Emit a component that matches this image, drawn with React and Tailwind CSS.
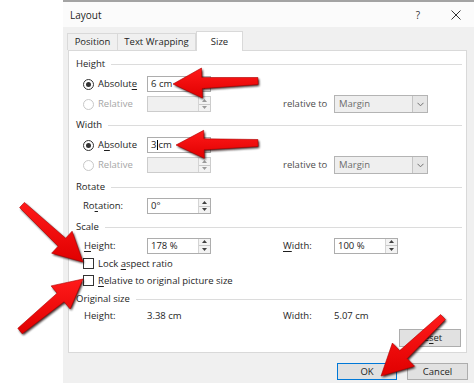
import React from "react";

function U({ children }) {
  return <span className="underline decoration-1 underline-offset-[2px]">{children}</span>;
}

function Tri({ up, color = "#404040" }) {
  return (
    <svg width="5" height="3" viewBox="0 0 5 3">
      {up ? <polygon points="0,3 5,3 2.5,0" fill={color} /> : <polygon points="0,0 5,0 2.5,3" fill={color} />}
    </svg>
  );
}

function SpinBox({ value, disabled }) {
  return (
    <div
      className={
        disabled
          ? "flex h-[16px] w-[64px] border border-[#cccccc] bg-[#f0f0f0]"
          : "flex h-[16px] w-[64px] border border-[#adadad] bg-white"
      }
    >
      <div className="flex-1 pl-[3px] leading-[14px] text-[#1e1e1e]">{value}</div>
      <div className="flex w-[12px] flex-col border-l border-[#d4d4d4] bg-[#f3f3f3]">
        <div className="flex flex-1 items-center justify-center">
          <Tri up color={disabled ? "#9a9a9a" : "#404040"} />
        </div>
        <div className="h-px bg-[#c8c8c8]" />
        <div className="flex flex-1 items-center justify-center">
          <Tri color={disabled ? "#9a9a9a" : "#404040"} />
        </div>
      </div>
    </div>
  );
}

function Select() {
  return (
    <div className="flex h-[18px] w-[94px] border border-[#b4b4b4] bg-[#efefef]">
      <div className="flex-1 pl-[4px] leading-[16px] text-[#6d6d6d]">Margin</div>
      <div className="flex w-[15px] items-center justify-center border-l border-[#c4c4c4] bg-[#e6e6e6]">
        <svg width="7" height="5" viewBox="0 0 7 5">
          <polyline points="0.5,0.8 3.5,3.8 6.5,0.8" fill="none" stroke="#707070" strokeWidth="1" />
        </svg>
      </div>
    </div>
  );
}

function Radio({ checked, disabled }) {
  return (
    <div
      className={
        disabled
          ? "flex h-[11px] w-[11px] items-center justify-center rounded-full border border-[#c8c8c8] bg-white"
          : "flex h-[11px] w-[11px] items-center justify-center rounded-full border border-[#333333] bg-white"
      }
    >
      {checked ? <div className="h-[5px] w-[5px] rounded-full bg-[#333333]" /> : null}
    </div>
  );
}

function Header({ children, mt }) {
  return (
    <div className={`flex h-[14px] items-center ${mt}`}>
      <span className="text-[#1e1e1e]">{children}</span>
      <div className="ml-[6px] h-px flex-1 bg-[#dcdcdc]" />
    </div>
  );
}

function RadioLabel({ checked, disabled, children }) {
  return (
    <div className="flex w-[71px] items-center pl-[7px]">
      <Radio checked={checked} disabled={disabled} />
      <span className={disabled ? "ml-[4px] text-[#a6a6a6]" : "ml-[4px] text-[#1e1e1e]"}>{children}</span>
    </div>
  );
}

function Checkbox({ children }) {
  return (
    <div className="flex h-[17px] items-center pl-[7px]">
      <div className="h-[11px] w-[11px] border border-[#333333] bg-white" />
      <span className="ml-[4px] text-[#1e1e1e]">{children}</span>
    </div>
  );
}

function arrowPoints(x1, y1, x2, y2, wTail, wBase, headLen, headHalf) {
  const dx = x2 - x1;
  const dy = y2 - y1;
  const len = Math.hypot(dx, dy);
  const ux = dx / len;
  const uy = dy / len;
  const px = -uy;
  const py = ux;
  const bx = x2 - ux * headLen;
  const by = y2 - uy * headLen;
  const pts = [
    [x1 + px * wTail, y1 + py * wTail],
    [bx + px * wBase, by + py * wBase],
    [bx + px * headHalf, by + py * headHalf],
    [x2, y2],
    [bx - px * headHalf, by - py * headHalf],
    [bx - px * wBase, by - py * wBase],
    [x1 - px * wTail, y1 - py * wTail],
  ];
  return pts.map((p) => `${p[0].toFixed(1)},${p[1].toFixed(1)}`).join(" ");
}

const ARROWS = [
  [258, 81, 173, 84, 3.5, 5.5, 29, 15],
  [258, 143, 176, 145, 3.5, 5.5, 28, 14],
  [22, 205, 83, 262, 3.5, 5.5, 29, 15],
  [20, 331, 83, 279, 3.5, 5.5, 29, 15],
  [443, 317, 381, 376, 3.5, 5.5, 31, 16],
];

function Arrows() {
  return (
    <svg className="pointer-events-none absolute left-0 top-0" width="474" height="387" viewBox="0 0 474 387">
      <defs>
        <filter id="sh" x="-20%" y="-20%" width="140%" height="140%">
          <feGaussianBlur stdDeviation="0.9" />
        </filter>
        <linearGradient id="rg" x1="0" y1="0" x2="0" y2="1">
          <stop offset="0" stopColor="#ff1a1a" />
          <stop offset="1" stopColor="#e00000" />
        </linearGradient>
      </defs>
      {ARROWS.map((a, i) => {
        const pts = arrowPoints(...a);
        return (
          <g key={i}>
            <polygon points={pts} fill="#1a0000" opacity="0.85" transform="translate(1.2,1.6)" filter="url(#sh)" />
            <polygon points={pts} fill="url(#rg)" stroke="#b00000" strokeWidth="0.6" strokeLinejoin="round" />
          </g>
        );
      })}
    </svg>
  );
}

export default function App() {
  return (
    <div className="relative h-[387px] w-[474px] overflow-hidden bg-white font-['Open_Sans','Noto_Sans',sans-serif] text-[9.5px] leading-none">
      <div className="ml-[63px] flex h-[383px] w-[411px] flex-col border-t-2 border-[#a3a3a3] bg-[#f0f0f0]">
        {/* title bar */}
        <div className="flex h-[25px] items-center bg-[#fbfbfb] pl-[7px] pr-[13px]">
          <span className="text-[10px] text-[#1e1e1e]">Layout</span>
          <span className="ml-auto text-[10px] text-[#333333]">?</span>
          <svg className="ml-[31px]" width="10" height="10" viewBox="0 0 10 10">
            <line x1="0.5" y1="0.5" x2="9.5" y2="9.5" stroke="#333333" strokeWidth="1" />
            <line x1="9.5" y1="0.5" x2="0.5" y2="9.5" stroke="#333333" strokeWidth="1" />
          </svg>
        </div>
        {/* tabs */}
        <div className="flex h-[23px] items-end pl-[4px]">
          <div className="flex h-[17px] w-[51px] items-center justify-center border border-b-0 border-[#d9d9d9] text-[#1e1e1e]">
            Position
          </div>
          <div className="flex h-[17px] w-[78px] items-center justify-center border border-b-0 border-l-0 border-[#d9d9d9] text-[#1e1e1e]">
            Text Wrapping
          </div>
          <div className="relative z-10 -mb-px flex h-[20px] w-[47px] items-center justify-center border border-b-0 border-[#d9d9d9] bg-white text-[#1e1e1e]">
            Size
          </div>
        </div>
        {/* panel */}
        <div className="ml-[5px] flex h-[303px] w-[399px] flex-col border border-[#d9d9d9] bg-white pl-[7px] pr-[4px] pt-[6px]">
          <Header mt="">Height</Header>
          <div className="mt-[3px] flex h-[20px] items-center">
            <RadioLabel checked>
              Absolut<U>e</U>
            </RadioLabel>
            <SpinBox value="6 cm" />
          </div>
          <div className="flex h-[20px] items-center">
            <RadioLabel disabled>Relative</RadioLabel>
            <SpinBox value="" disabled />
            <div className="w-[72px]" />
            <span className="w-[51px] text-[#4d4d4d]">relative to</span>
            <Select />
          </div>

          <Header mt="mt-[4px]">Width</Header>
          <div className="mt-[3px] flex h-[20px] items-center">
            <RadioLabel checked>
              A<U>b</U>solute
            </RadioLabel>
            <SpinBox value={<span>3<span className="ml-px inline-block h-[10px] w-px bg-black align-middle" />cm</span>} />
          </div>
          <div className="flex h-[20px] items-center">
            <RadioLabel disabled>Relative</RadioLabel>
            <SpinBox value="" disabled />
            <div className="w-[72px]" />
            <span className="w-[51px] text-[#4d4d4d]">relative to</span>
            <Select />
          </div>

          <Header mt="mt-[5px]">Rotate</Header>
          <div className="mt-[2px] flex h-[20px] items-center">
            <div className="w-[71px] pl-[7px] text-[#1e1e1e]">
              Ro<U>t</U>ation:
            </div>
            <SpinBox value="0°" />
          </div>

          <Header mt="mt-[4px]">Scale</Header>
          <div className="mt-[2px] flex h-[19px] items-center">
            <div className="w-[71px] pl-[8px] text-[#1e1e1e]">
              <U>H</U>eight:
            </div>
            <SpinBox value="178 %" />
            <div className="w-[72px]" />
            <div className="w-[51px] text-[#1e1e1e]">
              <U>W</U>idth:
            </div>
            <SpinBox value="100 %" />
          </div>
          <Checkbox>
            Lock <U>a</U>spect ratio
          </Checkbox>
          <Checkbox>
            <U>R</U>elative to original picture size
          </Checkbox>

          <Header mt="mt-[3px]">Original size</Header>
          <div className="mt-[2px] flex h-[16px] items-center text-[#1e1e1e]">
            <div className="w-[71px] pl-[8px]">Height:</div>
            <div className="w-[64px]">3.38 cm</div>
            <div className="w-[72px]" />
            <div className="w-[51px]">Width:</div>
            <div>5.07 cm</div>
          </div>
          <div className="mt-[5px] flex justify-end pr-[1px]">
            <div className="flex h-[18px] w-[62px] items-center justify-center border border-[#adadad] bg-[#e1e1e1] text-[#1e1e1e]">
              Re<U>s</U>et
            </div>
          </div>
        </div>
        {/* buttons */}
        <div className="mt-[10px] flex justify-end gap-[10px] pr-[6px]">
          <div className="flex h-[17px] w-[60px] items-center justify-center border border-[#0078d7] bg-[#e1e1e1] text-[#1e1e1e]">
            OK
          </div>
          <div className="flex h-[17px] w-[61px] items-center justify-center border border-[#adadad] bg-[#e1e1e1] text-[#1e1e1e]">
            Cancel
          </div>
        </div>
      </div>
      <Arrows />
    </div>
  );
}
